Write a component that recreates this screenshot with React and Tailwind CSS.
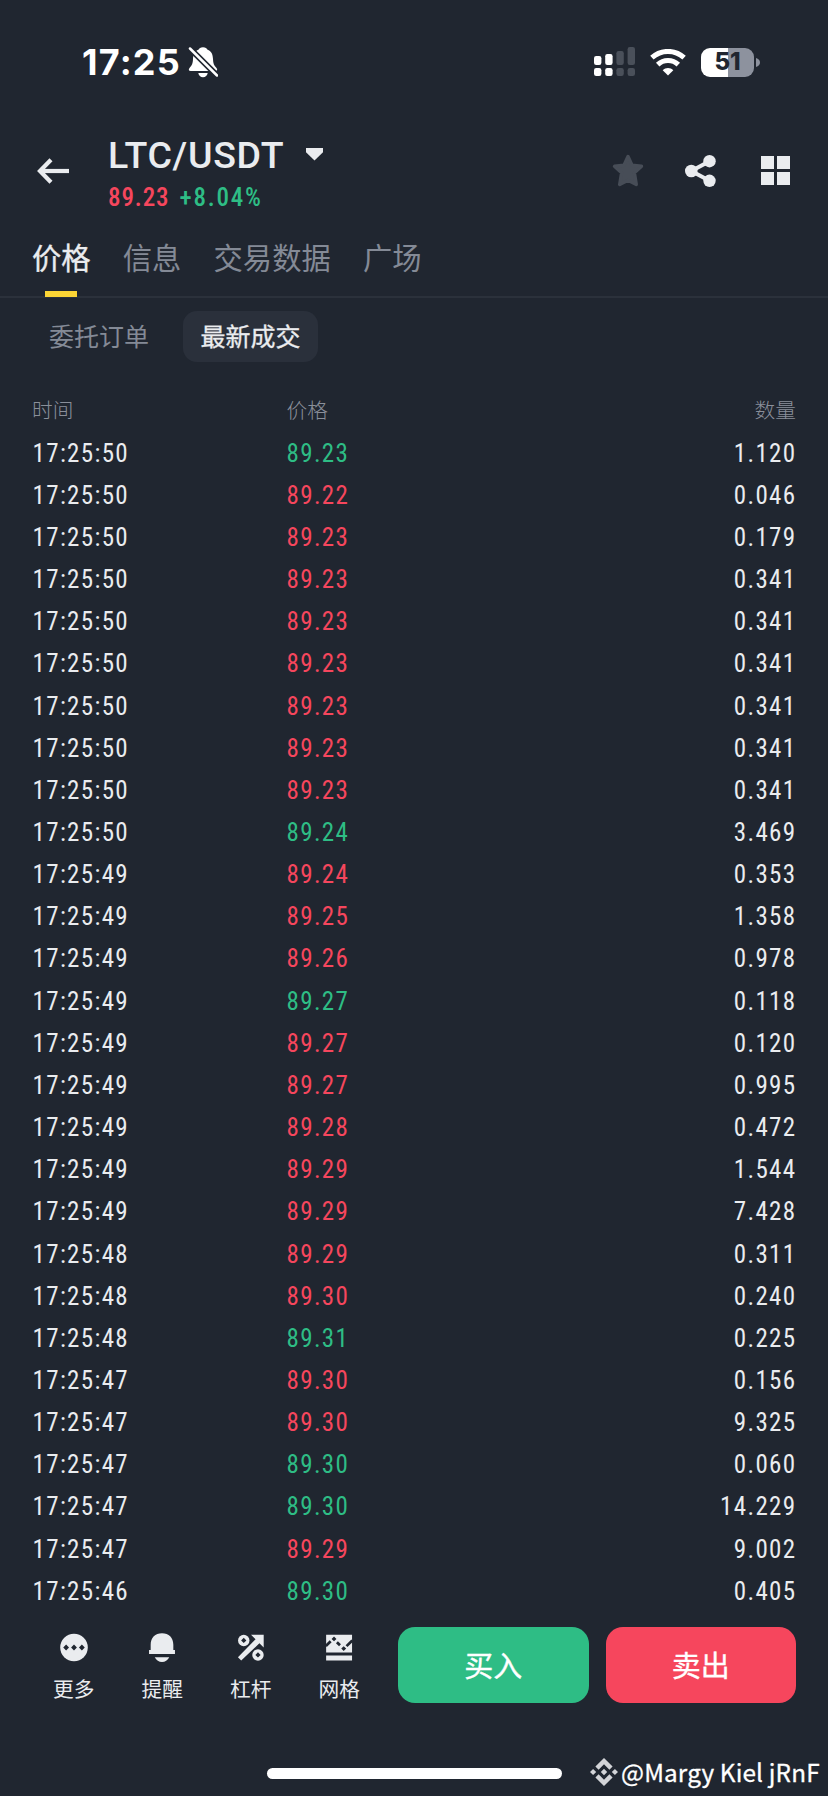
import React from 'react';

const TRADES = [
  ['17:25:50', '89.23', '1.120', 'up'],
  ['17:25:50', '89.22', '0.046', 'down'],
  ['17:25:50', '89.23', '0.179', 'down'],
  ['17:25:50', '89.23', '0.341', 'down'],
  ['17:25:50', '89.23', '0.341', 'down'],
  ['17:25:50', '89.23', '0.341', 'down'],
  ['17:25:50', '89.23', '0.341', 'down'],
  ['17:25:50', '89.23', '0.341', 'down'],
  ['17:25:50', '89.23', '0.341', 'down'],
  ['17:25:50', '89.24', '3.469', 'up'],
  ['17:25:49', '89.24', '0.353', 'down'],
  ['17:25:49', '89.25', '1.358', 'down'],
  ['17:25:49', '89.26', '0.978', 'down'],
  ['17:25:49', '89.27', '0.118', 'up'],
  ['17:25:49', '89.27', '0.120', 'down'],
  ['17:25:49', '89.27', '0.995', 'down'],
  ['17:25:49', '89.28', '0.472', 'down'],
  ['17:25:49', '89.29', '1.544', 'down'],
  ['17:25:49', '89.29', '7.428', 'down'],
  ['17:25:48', '89.29', '0.311', 'down'],
  ['17:25:48', '89.30', '0.240', 'down'],
  ['17:25:48', '89.31', '0.225', 'up'],
  ['17:25:47', '89.30', '0.156', 'down'],
  ['17:25:47', '89.30', '9.325', 'down'],
  ['17:25:47', '89.30', '0.060', 'up'],
  ['17:25:47', '89.30', '14.229', 'up'],
  ['17:25:47', '89.29', '9.002', 'down'],
  ['17:25:46', '89.30', '0.405', 'up'],
];

function BellOffIcon() {
  return (
    <svg className="h-[32px] w-[30px]" viewBox="0 0 30 32" fill="none">
      <path d="M15 1.2c-2.6 0-3.9 1.4-4.3 2.4C6.600 5 5.200 8.600 5 13c-.2 4.500-1 6.300-3.300 8.700C.3 23.200.5 25 2.700 25h24.600c2.200 0 2.400-1.800 1-3.300C26 19.300 25.200 17.500 25 13c-.2-4.400-1.600-8-5.700-9.400C18.900 2.600 17.600 1.200 15 1.200Z" fill="#fff" />
      <path d="M10.300 27h9.400c-.4 2.500-2.200 4.200-4.700 4.200s-4.300-1.700-4.700-4.200Z" fill="#fff" />
      <path d="M2 2.500 29 29.500" stroke="#202630" strokeWidth="6" />
      <path d="M2 2.500 29 29.500" stroke="#fff" strokeWidth="2.500" strokeLinecap="round" />
    </svg>
  );
}

function SignalIcon() {
  return (
    <svg className="h-[30px] w-[42px]" viewBox="0 0 42 30">
      <g fill="#fff">
        <rect x="0" y="9" width="7.400" height="9" rx="2.200" />
        <rect x="11.200" y="7" width="7.400" height="11" rx="2.200" />
        <rect x="0" y="21" width="7.400" height="8" rx="2.200" />
        <rect x="11.200" y="21" width="7.400" height="8" rx="2.200" />
      </g>
      <g fill="#4a505a">
        <rect x="22.400" y="4" width="7.400" height="14" rx="2.200" />
        <rect x="33.600" y="0" width="7.400" height="18" rx="2.200" />
        <rect x="22.400" y="21" width="7.400" height="8" rx="2.200" />
        <rect x="33.600" y="21" width="7.400" height="8" rx="2.200" />
      </g>
    </svg>
  );
}

function WifiIcon() {
  return (
    <svg className="h-[27px] w-[36px]" viewBox="0 0 36 27" fill="none">
      <path d="M1.900 8.700C11 .3 25 .3 34.100 8.700" stroke="#fff" strokeWidth="5" />
      <path d="M7.700 15.600C13.500 10.100 22.500 10.100 28.300 15.600" stroke="#fff" strokeWidth="5" />
      <path d="M12.700 21.200c3-2.800 7.600-2.800 10.600 0L18 26.500Z" fill="#fff" />
    </svg>
  );
}

function Battery() {
  return (
    <div className="flex items-center gap-[2px]">
      <div className="flex h-[29px] w-[53px] items-center justify-center rounded-[9px] bg-linear-to-r from-white from-51% to-[#8d929e] to-51%">
        <span className="font-['Inter',sans-serif] text-[24px] leading-none font-extrabold text-[#202630]">51</span>
      </div>
      <svg className="h-[9px] w-[4px]" viewBox="0 0 4 9">
        <path d="M0 0c2.500.6 4 2.300 4 4.500S2.500 8.400 0 9Z" fill="#8d929e" />
      </svg>
    </div>
  );
}

function BackIcon() {
  return (
    <svg className="h-[26px] w-[32px]" viewBox="0 0 32 26" fill="none" stroke="#eaecef" strokeWidth="4.200">
      <path d="M32 13H3" />
      <path d="M14 1.800 3 13l11 11.200" />
    </svg>
  );
}

function StarIcon() {
  return (
    <svg className="h-[33px] w-[32px]" viewBox="0 0 32 33">
      <path d="m16 2.500 4 8.700 9.500 1.100-7.100 6.500 1.900 11.700L16 26.200 7.700 30.500l1.900-11.700-7.100-6.500 9.500-1.100Z" fill="#474d57" stroke="#474d57" strokeWidth="3.400" strokeLinejoin="round" />
    </svg>
  );
}

function ShareIcon() {
  return (
    <svg className="h-[32px] w-[31px]" viewBox="0 0 31 32">
      <path d="M24.500 6.200 6.300 16l18.200 9.800" fill="none" stroke="#eaecef" strokeWidth="4" />
      <circle cx="24.500" cy="6.200" r="6.200" fill="#eaecef" />
      <circle cx="6.300" cy="16" r="6.300" fill="#eaecef" />
      <circle cx="24.500" cy="25.800" r="6.200" fill="#eaecef" />
    </svg>
  );
}

function GridIcon() {
  return (
    <svg className="h-[29px] w-[29px]" viewBox="0 0 29 29" fill="#eaecef">
      <path d="M0 0h13v13H0zM16 0h13v13H16zM0 16h13v13H0zM16 16h13v13H16z" />
    </svg>
  );
}

function MoreIcon() {
  return (
    <svg className="h-[32px] w-[32px]" viewBox="0 0 32 32">
      <circle cx="16" cy="16" r="15.200" fill="#eaecef" />
      <path d="m7.300 12.800 3.200 3.200-3.200 3.200L4.100 16ZM16 12.800l3.200 3.200-3.200 3.200-3.200-3.200ZM24.700 12.800l3.200 3.200-3.200 3.200-3.200-3.200Z" fill="#202630" />
    </svg>
  );
}

function BellIcon() {
  return (
    <svg className="h-[32px] w-[32px]" viewBox="0 0 32 32" fill="#eaecef">
      <path d="M3.500 13C3.500 5 8.500.2 16 .2S28.500 5 28.500 13v5.800h1.800v4.400H1.700v-4.400h1.800Z" />
      <path d="M8 26.800h16c-1.800 3.500-4.500 5.200-8 5.200s-6.200-1.700-8-5.200Z" />
    </svg>
  );
}

function LeverageIcon() {
  return (
    <svg className="h-[32px] w-[32px]" viewBox="0 0 32 32">
      <path d="M16 2h14v14l-4.700-4.700L5.200 30.400l-3.600-3.600L21 7Z" fill="#eaecef" />
      <circle cx="8" cy="8.200" r="6.300" fill="#eaecef" />
      <circle cx="23.700" cy="24.200" r="6.300" fill="#eaecef" />
      <path d="m8 5.300 2.900 2.900L8 11.100 5.100 8.200ZM23.700 21.300l2.900 2.900-2.900 2.900-2.900-2.900Z" fill="#202630" />
    </svg>
  );
}

function GridBotIcon() {
  return (
    <svg className="h-[32px] w-[32px]" viewBox="0 0 32 32">
      <path d="M1.800 2h28.600v19.600H1.800zM1.800 24.900h28.600v5.400H1.800z" fill="#eaecef" />
      <path d="M1.500 14.400 6.800 9.200M13.700 10.200l3.400 3.400M24.300 14.500l6.400-6.300" stroke="#202630" strokeWidth="3" />
      <path d="m10.500 3.800 2.700 2.700-2.700 2.700-2.700-2.700ZM21.200 14.500l2.700 2.700-2.700 2.700-2.700-2.700Z" fill="#202630" />
    </svg>
  );
}

function BinanceIcon() {
  return (
    <svg className="h-[28px] w-[28px]" viewBox="0 0 28 28" fill="#d3d4d8">
      <path d="m14 0 8.600 8.500-3.200 3.200L14 6.300l-5.400 5.400-3.200-3.200ZM3.100 10.900 6.200 14l-3.100 3.100L0 14ZM24.900 10.900 28 14l-3.100 3.100-3.100-3.100ZM14 10.800l3.200 3.200-3.200 3.200-3.200-3.200ZM14 28l-8.600-8.500 3.200-3.200 5.400 5.400 5.400-5.400 3.200 3.200Z" />
    </svg>
  );
}

function StatusBar() {
  return (
    <div className="flex h-[124px] items-center justify-between pr-[68px] pl-[82px]">
      <div className="flex items-center gap-[7px]">
        <span className="font-['Inter',sans-serif] text-[36px] leading-none font-bold tracking-[1.200px] text-white">17:25</span>
        <BellOffIcon />
      </div>
      <div className="flex items-center">
        <div className="mr-[14px]"><SignalIcon /></div>
        <div className="mr-[15px]"><WifiIcon /></div>
        <Battery />
      </div>
    </div>
  );
}

function Header() {
  return (
    <header className="flex h-[96px] items-center pr-[38px] pl-[37px]">
      <div className="pb-[2px]"><BackIcon /></div>
      <div className="ml-[39px] flex flex-col">
        <div className="flex h-[52px] items-center pt-[12px]">
          <h1 className="text-[37.500px] leading-none font-medium tracking-[0.700px]">LTC/USDT</h1>
          <svg className="mb-[4px] ml-[21.500px] h-[13px] w-[17px]" viewBox="0 0 17 13">
            <path d="M0 0h17v4.200L8.500 12.600 0 4.200Z" fill="#eaecef" />
          </svg>
        </div>
        <div className="flex h-[44px] items-start gap-[10px] pt-[9px] text-[25px] leading-[25px] font-medium [font-stretch:87%]">
          <span className="tracking-[0.900px] text-[#f6465d]">89.23</span>
          <span className="tracking-[1.800px] text-[#2ebd85]">+8.04%</span>
        </div>
      </div>
      <div className="ml-auto flex items-center pb-[3px]">
        <div className="mr-[41px]"><StarIcon /></div>
        <div className="mr-[45px]"><ShareIcon /></div>
        <GridIcon />
      </div>
    </header>
  );
}

function Tabs() {
  return (
    <nav className="flex h-[78px] gap-[32.200px] border-b-2 border-[#2b313b] pl-[32px] font-['Noto_Sans_CJK_SC',sans-serif] text-[29.300px] text-[#848a96]">
      <div className="relative flex items-center pb-[2px] text-[#eaecef] [-webkit-text-stroke:0.35px_currentColor]">
        价格
        <span className="absolute -bottom-px left-1/2 h-[6px] w-[32px] -translate-x-1/2 bg-[#fcd535]" />
      </div>
      <div className="flex items-center pb-[2px]">信息</div>
      <div className="flex items-center pb-[2px]">交易数据</div>
      <div className="flex items-center pb-[2px]">广场</div>
    </nav>
  );
}

function SubTabs() {
  return (
    <div className="flex h-[64px] items-center gap-[16px] pt-[12px] pl-[31px] font-['Noto_Sans_CJK_SC',sans-serif] text-[25px]">
      <div className="flex h-[51px] items-center px-[18px] text-[#848a96]">委托订单</div>
      <div className="flex h-[51px] items-center rounded-[14px] bg-[#2a303b] px-[17.500px] text-[#eaecef] [-webkit-text-stroke:0.3px_currentColor]">最新成交</div>
    </div>
  );
}

function TradeTable() {
  return (
    <section className="mt-[27px] px-[32px]">
      <div className="mb-[1px] grid h-[42px] grid-cols-[254.500px_1fr_auto] items-center font-['Noto_Sans_CJK_SC',sans-serif] text-[20.700px] font-light text-[#8a8f9a]">
        <span>时间</span>
        <span>价格</span>
        <span>数量</span>
      </div>
      {TRADES.map(([time, price, amount, side], i) => (
        <div key={i} className="grid h-[42.170px] grid-cols-[254.500px_1fr_auto] items-center text-[25px] leading-none tracking-[1.350px] [font-stretch:87%]">
          <span className="pl-[0.500px]">{time}</span>
          <span className={side === 'up' ? 'text-[#2ebd85]' : 'text-[#f6465d]'}>{price}</span>
          <span className="-mr-[0.500px]">{amount}</span>
        </div>
      ))}
    </section>
  );
}

function Action({ icon, label }) {
  return (
    <div className="flex w-[88.500px] flex-col items-center gap-[11px]">
      {icon}
      <span className="text-[20.700px] leading-[30px]">{label}</span>
    </div>
  );
}

function BottomBar() {
  return (
    <div className="mt-[15px] flex h-[76px] pr-[32px] pl-[29.500px] font-['Noto_Sans_CJK_SC',sans-serif]">
      <div className="flex pt-[6px]">
        <Action icon={<MoreIcon />} label="更多" />
        <Action icon={<BellIcon />} label="提醒" />
        <Action icon={<LeverageIcon />} label="杠杆" />
        <Action icon={<GridBotIcon />} label="网格" />
      </div>
      <div className="ml-[14.500px] flex flex-1 gap-[17px] text-[29px] text-white [-webkit-text-stroke:0.35px_currentColor]">
        <button className="flex-1 rounded-[17px] bg-[#2ebd85] pb-[2px]">买入</button>
        <button className="flex-1 rounded-[17px] bg-[#f6465d] pb-[2px]">卖出</button>
      </div>
    </div>
  );
}

export default function App() {
  return (
    <div className="flex h-[1796px] w-[828px] flex-col overflow-hidden bg-[#202630] font-['Roboto',sans-serif] text-[#eaecef]">
      <StatusBar />
      <Header />
      <Tabs />
      <SubTabs />
      <TradeTable />
      <BottomBar />
      <footer className="mt-auto flex h-[46px] items-center pl-[267px]">
        <div className="h-[11px] w-[295px] rounded-full bg-white" />
        <div className="ml-[28px] flex items-center gap-[3px] pb-[2px]">
          <BinanceIcon />
          <span className="font-['Noto_Sans_CJK_SC',sans-serif] text-[24.300px] leading-none tracking-[0.150px] whitespace-nowrap text-white [-webkit-text-stroke:0.3px_currentColor]">@Margy Kiel jRnF</span>
        </div>
      </footer>
    </div>
  );
}
